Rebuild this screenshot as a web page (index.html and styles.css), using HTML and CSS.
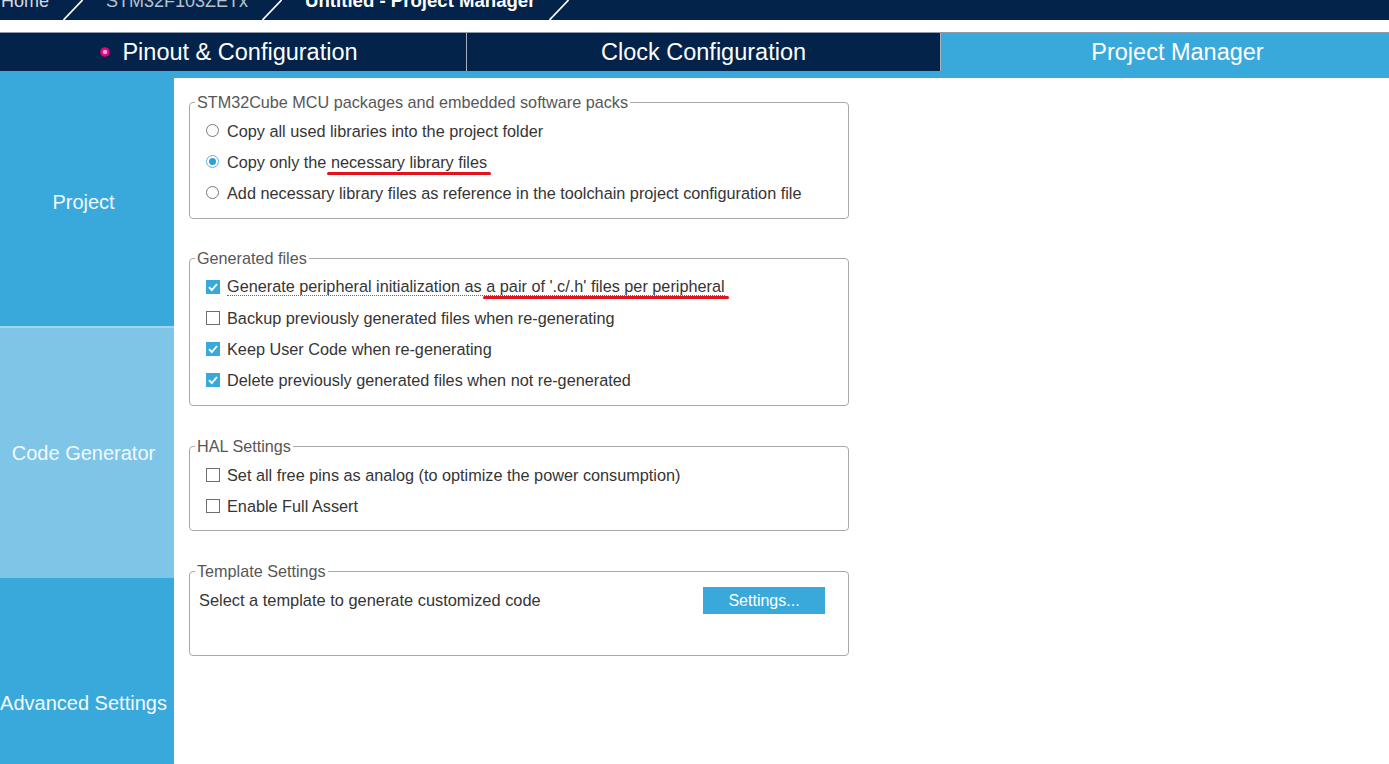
FILE: index.html
```html
<!DOCTYPE html>
<html lang="en">
<head>
<meta charset="utf-8">
<title>Untitled - Project Manager</title>
<link rel="stylesheet" href="styles.css">
</head>
<body>
<div class="app">
  <header class="crumbs">
    <span class="crumb crumb-first">Home</span>
    <svg class="slash" viewBox="0 0 20 20"><line x1="0.5" y1="20" x2="19.5" y2="0" stroke="#fff" stroke-width="1.6"/></svg>
    <span class="crumb crumb-dim">STM32F103ZETx</span>
    <svg class="slash" viewBox="0 0 20 20"><line x1="0.5" y1="20" x2="19.5" y2="0" stroke="#fff" stroke-width="1.6"/></svg>
    <span class="crumb crumb-cur">Untitled - Project Manager</span>
    <svg class="slash" viewBox="0 0 20 20"><line x1="0.5" y1="20" x2="19.5" y2="0" stroke="#fff" stroke-width="1.6"/></svg>
  </header>

  <nav class="tabs">
    <div class="tab tab-pinout">
      <svg class="tab-dot" viewBox="0 0 10 10"><circle cx="5" cy="5" r="4.8" fill="#e4007f"/><circle cx="5" cy="5" r="2.3" fill="#f6a3cf"/></svg>
      <span>Pinout &amp; Configuration</span>
    </div>
    <div class="tab tab-clock"><span>Clock Configuration</span></div>
    <div class="tab tab-active"><span>Project Manager</span></div>
  </nav>

  <div class="workspace">
    <aside class="side">
      <div class="side-item side-project">Project</div>
      <div class="side-item side-code">Code Generator</div>
      <div class="side-item side-adv">Advanced Settings</div>
    </aside>

    <main class="content">
      <fieldset class="group group-first">
        <legend>STM32Cube MCU packages and embedded software packs</legend>
        <div class="row"><span class="radio"></span><span class="label">Copy all used libraries into the project folder</span></div>
        <div class="row"><span class="radio radio-on"></span><span class="label">Copy only the<span class="mark"> necessary library files</span></span></div>
        <div class="row"><span class="radio"></span><span class="label">Add necessary library files as reference in the toolchain project configuration file</span></div>
      </fieldset>

      <fieldset class="group">
        <legend>Generated files</legend>
        <div class="row"><span class="check check-on"><svg viewBox="0 0 14 14"><path d="M3 7.2 L5.8 10 L11 4" fill="none" stroke="#fff" stroke-width="1.9"/></svg></span><span class="label label-focus">Generate peripheral initialization as<span class="mark"> a pair of '.c/.h' files per peripheral</span></span></div>
        <div class="row"><span class="check"></span><span class="label">Backup previously generated files when re-generating</span></div>
        <div class="row"><span class="check check-on"><svg viewBox="0 0 14 14"><path d="M3 7.2 L5.8 10 L11 4" fill="none" stroke="#fff" stroke-width="1.9"/></svg></span><span class="label">Keep User Code when re-generating</span></div>
        <div class="row"><span class="check check-on"><svg viewBox="0 0 14 14"><path d="M3 7.2 L5.8 10 L11 4" fill="none" stroke="#fff" stroke-width="1.9"/></svg></span><span class="label">Delete previously generated files when not re-generated</span></div>
      </fieldset>

      <fieldset class="group group-hal">
        <legend>HAL Settings</legend>
        <div class="row"><span class="check"></span><span class="label">Set all free pins as analog (to optimize the power consumption)</span></div>
        <div class="row"><span class="check"></span><span class="label">Enable Full Assert</span></div>
      </fieldset>

      <fieldset class="group group-template">
        <legend>Template Settings</legend>
        <div class="template-row">
          <span class="template-text">Select a template to generate customized code</span>
          <button class="btn" type="button">Settings...</button>
        </div>
      </fieldset>
    </main>
  </div>
</div>
</body>
</html>
```

FILE: styles.css
```css
html, body {
  margin: 0;
  padding: 0;
  height: 100%;
  overflow: hidden;
  background: #fff;
  font-family: "Liberation Sans", Arial, sans-serif;
}

.app {
  display: flex;
  flex-direction: column;
  height: 764px;
  overflow: hidden;
}

/* breadcrumb bar */
.crumbs {
  flex: none;
  height: 20px;
  background: #03234b;
  display: flex;
  align-items: flex-start;
  overflow: hidden;
  margin-bottom: 12px;
}

.crumb {
  font-size: 18px;
  line-height: 18px;
  margin-top: -8px;
  white-space: nowrap;
  color: #d4d9e1;
}

.crumb-first {
  margin-left: 1px;
}

.crumb-dim {
  color: #b9c1cd;
}

.crumb-cur {
  color: #fff;
  font-weight: bold;
  font-size: 18.6px;
}

.slash {
  flex: none;
  width: 20px;
  height: 20px;
  margin: 0 23px 0 14px;
}

/* main tabs */
.tabs {
  flex: none;
  display: flex;
  height: 38px;
  background: #03234b;
  border-top: 1px solid #8e9bab;
  border-bottom: 7px solid #39a9dc;
  overflow: hidden;
}

.tab {
  flex: none;
  display: flex;
  align-items: center;
  justify-content: center;
  color: #fff;
  font-size: 23.5px;
  white-space: nowrap;
}

.tab-pinout {
  width: 458px;
  padding-right: 8px;
  border-right: 1px solid #a7b0bc;
}

.tab-clock {
  width: 473px;
  border-right: 1px solid #a7b0bc;
}

.tab-active {
  width: 473px;
  background: #39a9dc;
}

.tab-dot {
  width: 10px;
  height: 10px;
  margin-right: 12px;
}

/* workspace */
.workspace {
  flex: 1;
  display: flex;
  min-height: 0;
  overflow: hidden;
}

.side {
  flex: none;
  width: 174px;
  display: flex;
  flex-direction: column;
  background: #39a9dc;
}

.side-item {
  flex: none;
  display: flex;
  align-items: center;
  justify-content: center;
  padding-right: 7px;
  color: #f2f9fd;
  font-size: 20px;
  white-space: nowrap;
}

.side-project {
  height: 248px;
  border-bottom: 2px solid #a3d6ef;
}

.side-code {
  height: 250px;
  background: #7fc5e8;
}

.side-adv {
  height: 250px;
}

.content {
  flex: 1;
  padding: 15px 0 0 15px;
}

.group {
  box-sizing: border-box;
  width: 660px;
  margin: 0 0 31px 0;
  padding: 4px 0 10px 5px;
  border: 1px solid #a9a9a9;
  border-radius: 4px;
  min-inline-size: 0;
}

.group-first {
  margin-bottom: 30px;
}

.group-hal {
  padding-bottom: 9px;
}

.group legend {
  font-size: 16.2px;
  line-height: 18px;
  color: #575757;
  padding: 0 2px;
}

.row {
  display: flex;
  align-items: center;
  height: 31px;
  padding-left: 11px;
  font-size: 16.25px;
  color: #353535;
  white-space: nowrap;
}

.label {
  line-height: 18px;
}

.label-focus {
  border-bottom: 1px dotted #6a6a6a;
}

.mark {
  position: relative;
}

.mark::after {
  content: "";
  position: absolute;
  left: 1px;
  right: -4px;
  bottom: -4px;
  height: 3px;
  border-radius: 2px;
  background: #e3121d;
}

.radio {
  flex: none;
  box-sizing: border-box;
  width: 13px;
  height: 13px;
  border: 1.3px solid #7a7a7a;
  border-radius: 50%;
  background: #fff;
  margin-right: 8px;
  position: relative;
}

.radio-on {
  border-color: #5ab4e2;
}

.radio-on::after {
  content: "";
  position: absolute;
  left: 1.7px;
  top: 1.7px;
  width: 7px;
  height: 7px;
  border-radius: 50%;
  background: #2f9fd8;
}

.check {
  flex: none;
  box-sizing: border-box;
  width: 14px;
  height: 14px;
  border: 1px solid #6e6e6e;
  background: #fff;
  margin-right: 7px;
  display: flex;
}

.check svg {
  width: 14px;
  height: 14px;
}

.check-on {
  border: none;
  background: #39a9dc;
}

.group-template {
  padding-bottom: 41px;
}

.template-row {
  display: flex;
  align-items: center;
  justify-content: space-between;
  padding: 3px 23px 0 4px;
  font-size: 16.4px;
  color: #353535;
}

.btn {
  width: 122px;
  height: 27px;
  border: none;
  background: #39a9dc;
  color: #fff;
  font-family: "Liberation Sans", Arial, sans-serif;
  font-size: 16px;
  padding: 0;
}
```
